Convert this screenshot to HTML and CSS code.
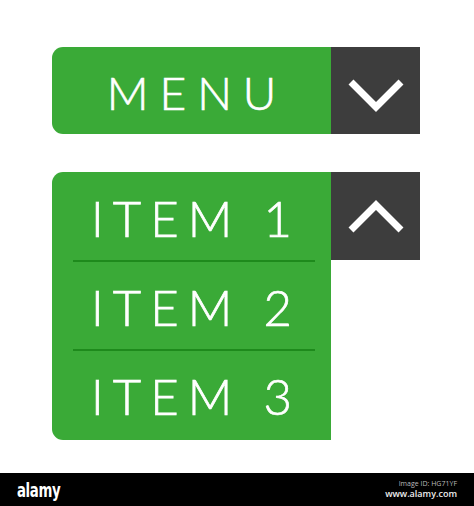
FILE: index.html
```html
<!DOCTYPE html>
<html lang="en">
<head>
    <meta charset="UTF-8">
    <meta name="viewport" content="width=device-width, initial-scale=1.0">
    <title>Menu</title>
    <link rel="stylesheet" href="styles.css">
</head>
<body>
    <main class="stage">
        <div class="menu-bar">
            <div class="menu-label">MENU</div>
            <div class="menu-toggle">
                <svg class="chevron-down" width="56" height="40" viewBox="0 0 56 40">
                    <polyline points="3,6 28,31 53,6" fill="none" stroke="#fff" stroke-width="7" stroke-linecap="butt" stroke-linejoin="miter"/>
                </svg>
            </div>
        </div>

        <div class="menu-open">
            <ul class="menu-list">
                <li>ITEM 1</li>
                <li>ITEM 2</li>
                <li>ITEM 3</li>
            </ul>
            <div class="menu-toggle">
                <svg width="56" height="40" viewBox="0 0 56 40">
                    <polyline points="3,34 28,9 53,34" fill="none" stroke="#fff" stroke-width="7" stroke-linecap="butt" stroke-linejoin="miter"/>
                </svg>
            </div>
        </div>
    </main>
    <footer class="credit">
        <span class="logo">alamy</span>
        <div class="credit-info">
            <span class="image-id">Image ID: HG71YF</span>
            <span class="site">www.alamy.com</span>
        </div>
    </footer>
</body>
</html>
```

FILE: styles.css
```css
body {
    margin: 0;
    padding: 0;
    background: #fff;
    font-family: 'Lato', 'Open Sans', sans-serif;
    width: 474px;
    height: 506px;
    display: flex;
    flex-direction: column;
}

.stage {
    flex: 1;
    padding: 47px 0 0 52px;
}

.menu-bar {
    display: flex;
    height: 87px;
    width: 368px;
}

.menu-label {
    width: 279px;
    background: #3aaa37;
    border-radius: 11px 0 0 11px;
    color: #fff;
    font-weight: 300;
    -webkit-text-stroke: 0.7px #fff;
    font-size: 46px;
    letter-spacing: 11px;
    display: flex;
    align-items: center;
    justify-content: center;
    padding: 4px 0 0 11px;
    box-sizing: border-box;
}

.menu-toggle {
    width: 89px;
    height: 87px;
    background: #3d3d3d;
    display: flex;
    align-items: center;
    justify-content: center;
}

.chevron-down {
    margin-top: 10px;
}

.menu-open {
    display: flex;
    align-items: flex-start;
    margin-top: 38px;
}

.menu-open .menu-toggle {
    height: 88px;
}

.menu-list {
    list-style: none;
    margin: 0;
    padding: 0;
    width: 279px;
    background: #3aaa37;
    border-radius: 11px 0 0 11px;
}

.menu-list li {
    height: 89px;
    display: flex;
    align-items: center;
    justify-content: center;
    color: #fff;
    font-weight: 300;
    -webkit-text-stroke: 0.7px #fff;
    font-size: 49px;
    letter-spacing: 9px;
    padding: 2px 0 0 9px;
    box-sizing: border-box;
    position: relative;
}

.menu-list li + li::before {
    content: "";
    position: absolute;
    top: -1px;
    left: 21px;
    right: 16px;
    height: 2px;
    background: #1e8a1c;
}

.menu-list li:last-child {
    height: 90px;
}

.credit {
    height: 33px;
    background: #000;
    display: flex;
    align-items: center;
    justify-content: space-between;
    padding: 0 17px;
}

.logo {
    color: #fff;
    font-family: 'Liberation Sans Narrow', 'DejaVu Sans Condensed', sans-serif;
    font-weight: bold;
    font-size: 19px;
    letter-spacing: -0.5px;
    transform: scaleX(0.78);
    transform-origin: left center;
}

.credit-info {
    display: flex;
    flex-direction: column;
    align-items: flex-end;
    font-family: 'Open Sans', sans-serif;
    line-height: 1.25;
}

.image-id {
    font-size: 7px;
    color: #bbb;
}

.site {
    font-size: 9px;
    font-weight: 600;
    color: #eee;
}
```
